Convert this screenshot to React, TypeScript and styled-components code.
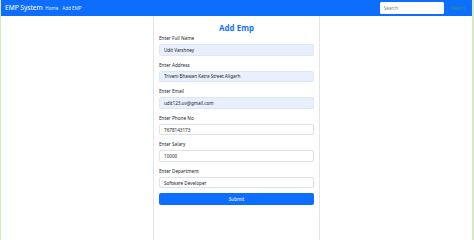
import React from "react";
import styled, { createGlobalStyle } from "styled-components";

const Global = createGlobalStyle`
  html, body { margin: 0; padding: 0; }
  body {
    background: #d3eabd;
    font-family: "Noto Sans", "Open Sans", Arial, sans-serif;
    color: #212529;
  }
  * { box-sizing: border-box; }
`;

const Frame = styled.div`
  margin: 0 2px 0 1px;
  min-height: 100vh;
  background: #ffffff;
  display: flex;
  flex-direction: column;
`;

const Navbar = styled.nav`
  height: 16px;
  background: #0d6efd;
  display: flex;
  align-items: center;
  padding: 0 2px 0 4px;
`;

const Brand = styled.span`
  color: #ffffff;
  font-size: 6.6px;
  line-height: 1;
  margin-right: 2.5px;
  white-space: nowrap;
`;

const NavLinks = styled.div`
  display: flex;
  gap: 4px;
  flex: 1;
`;

const NavLink = styled.span`
  color: rgba(255, 255, 255, 0.92);
  font-size: 4.6px;
  white-space: nowrap;
`;

const SearchForm = styled.form`
  display: flex;
  align-items: center;
  gap: 2px;
`;

const SearchInput = styled.input`
  width: 64px;
  height: 11.5px;
  border: none;
  border-radius: 1.5px;
  background: #ffffff;
  padding: 0 4px;
  font-family: inherit;
  font-size: 4.5px;
  outline: none;
  &::placeholder { color: #7a7f85; }
`;

const OutlineButton = styled.button`
  height: 11.5px;
  padding: 0 4px;
  border: 1px solid transparent;
  background: transparent;
  color: #2e9a5a;
  font-family: inherit;
  font-size: 4.5px;
  border-radius: 1.5px;
`;

const Main = styled.main`
  flex: 1;
  display: flex;
  justify-content: center;
`;

const Card = styled.section`
  width: 167px;
  border-left: 1px solid #e3e6e9;
  border-right: 1px solid #e3e6e9;
  padding: 6px 5px 0;
  display: flex;
  flex-direction: column;
`;

const Title = styled.h3`
  margin: 0;
  text-align: center;
  color: #1a73f8;
  font-size: 8px;
  line-height: 12px;
  font-weight: 700;
`;

const Field = styled.div`
  display: flex;
  flex-direction: column;
  margin-bottom: 5.1px;
`;

const Label = styled.label`
  font-size: 4.7px;
  line-height: 8px;
  margin-bottom: 2px;
  color: #212529;
`;

const Input = styled.input<{ $filled?: boolean }>`
  height: 11.5px;
  width: 100%;
  border: 0.6px solid ${(p) => (p.$filled ? "#dfe5f3" : "#dee2e6")};
  border-radius: 2px;
  background: ${(p) => (p.$filled ? "#e8f0fe" : "#ffffff")};
  padding: 0 4px;
  font-family: inherit;
  font-size: 4.6px;
  color: #212529;
  outline: none;
`;

const Submit = styled.button`
  margin-top: -0.3px;
  height: 11.7px;
  width: 100%;
  border: none;
  border-radius: 2px;
  background: #0d6efd;
  color: #ffffff;
  font-family: inherit;
  font-size: 4.6px;
`;

const fields = [
  { label: "Enter Full Name", value: "Udit Varshney", filled: true },
  { label: "Enter Address", value: "Triveni Bhawan Katra Street Aligarh", filled: true },
  { label: "Enter Email", value: "udit123.uv@gmail.com", filled: true },
  { label: "Enter Phone No", value: "7678143173", filled: false },
  { label: "Enter Salary", value: "10000", filled: false },
  { label: "Enter Department", value: "Software Developer", filled: false },
];

export default function App() {
  return (
    <>
      <Global />
      <Frame>
        <Navbar>
          <Brand>EMP System</Brand>
          <NavLinks>
            <NavLink>Home</NavLink>
            <NavLink>Add EMP</NavLink>
          </NavLinks>
          <SearchForm onSubmit={(e) => e.preventDefault()}>
            <SearchInput placeholder="Search" />
            <OutlineButton type="button">Search</OutlineButton>
          </SearchForm>
        </Navbar>
        <Main>
          <Card>
            <Title>Add Emp</Title>
            {fields.map((f) => (
              <Field key={f.label}>
                <Label>{f.label}</Label>
                <Input $filled={f.filled} defaultValue={f.value} />
              </Field>
            ))}
            <Submit type="button">Submit</Submit>
          </Card>
        </Main>
      </Frame>
    </>
  );
}
